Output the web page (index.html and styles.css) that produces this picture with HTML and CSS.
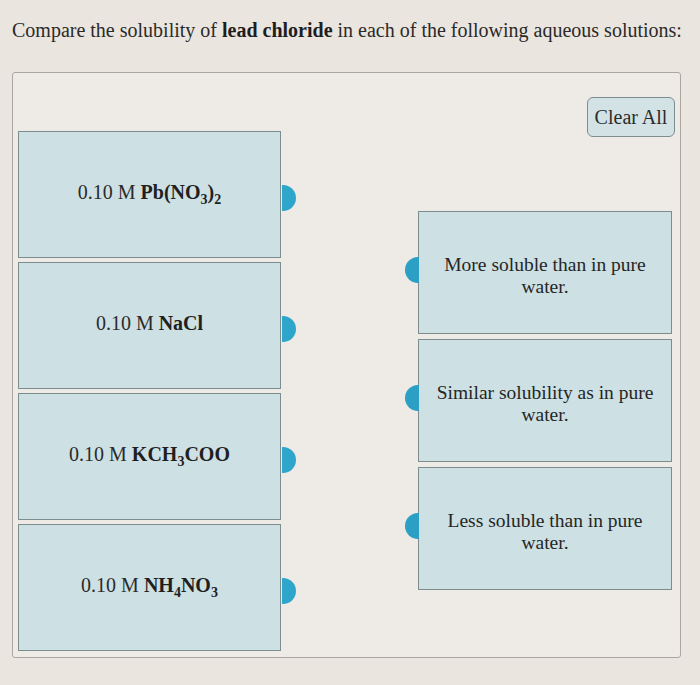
FILE: index.html
```html
<!DOCTYPE html>
<html lang="en">
<head>
<meta charset="utf-8">
<title>Solubility matching</title>
<link rel="stylesheet" href="styles.css">
</head>
<body>
  <p class="prompt">Compare the solubility of <b>lead chloride</b> in each of the following aqueous solutions:</p>

  <div class="board">
    <div class="columns">
      <div class="items">
        <div class="card item"><span>0.10 M <b>Pb(NO<sub>3</sub>)<sub>2</sub></b></span><i class="tab tab-out"></i></div>
        <div class="card item"><span>0.10 M <b>NaCl</b></span><i class="tab tab-out"></i></div>
        <div class="card item"><span>0.10 M <b>KCH<sub>3</sub>COO</b></span><i class="tab tab-out"></i></div>
        <div class="card item"><span>0.10 M <b>NH<sub>4</sub>NO<sub>3</sub></b></span><i class="tab tab-out"></i></div>
      </div>

      <div class="targets">
        <button class="clear" type="button">Clear All</button>
        <div class="card target"><i class="tab tab-in"></i><span>More soluble than in pure water.</span></div>
        <div class="card target"><i class="tab tab-in"></i><span>Similar solubility as in pure water.</span></div>
        <div class="card target"><i class="tab tab-in"></i><span>Less soluble than in pure water.</span></div>
      </div>
    </div>
  </div>
</body>
</html>
```

FILE: styles.css
```css
html, body {
  margin: 0;
  padding: 0;
  background: #ebe5df;
  font-family: "Liberation Serif", "Times New Roman", serif;
  color: #2b2b2b;
}

.prompt {
  margin: 0;
  padding: 17px 0 0 12px;
  font-size: 20px;
  line-height: 26px;
  white-space: nowrap;
  color: #2a2a2a;
}

.prompt b {
  color: #1e1e1e;
}

.board {
  margin: 29px 0 0 12px;
  width: 669px;
  border: 1px solid #aaa6a1;
  border-radius: 3px;
  background: #eeeae5;
  box-sizing: border-box;
  padding: 24px 0 6px;
}

.columns {
  display: flex;
  justify-content: space-between;
  padding: 0 8px 0 5px;
}

.items {
  display: flex;
  flex-direction: column;
  gap: 4px;
  padding-top: 34px;
  width: 263px;
}

.targets {
  display: flex;
  flex-direction: column;
  align-items: flex-end;
  gap: 5px;
  width: 254px;
}

.card {
  position: relative;
  display: flex;
  align-items: center;
  justify-content: center;
  text-align: center;
  background: #cde0e3;
  border: 1px solid #7d8c8e;
  box-sizing: border-box;
}

.item {
  height: 127px;
  font-size: 20px;
  padding-bottom: 4px;
}

.item b,
.target span {
  color: #1f1f1f;
}

.item sub {
  font-size: 14px;
  vertical-align: -5px;
  line-height: 0;
}

.target {
  width: 254px;
  height: 123px;
  font-size: 19.5px;
  line-height: 22px;
  padding: 6px 10px 0;
}

.target span {
  color: #262626;
}

.clear {
  margin: 0 -3px 69px 0;
  width: 88px;
  height: 40px;
  font-family: inherit;
  font-size: 20px;
  color: #2b2b2b;
  background: #d3e3e5;
  border: 1px solid #7d8c8e;
  border-radius: 6px;
  padding: 0;
}

/* half-disc drag handles on the card edges */
.tab {
  position: absolute;
  top: 50%;
  width: 14px;
  height: 26px;
  background: #2ea6cb;
}

.tab-out {
  left: 100%;
  margin-left: 2px;
  border-radius: 0 13px 13px 0;
  margin-top: -10px;
}

.tab-in {
  right: 100%;
  border-radius: 13px 0 0 13px;
  background: #2b9fc4;
  margin-top: -16px;
}
```
